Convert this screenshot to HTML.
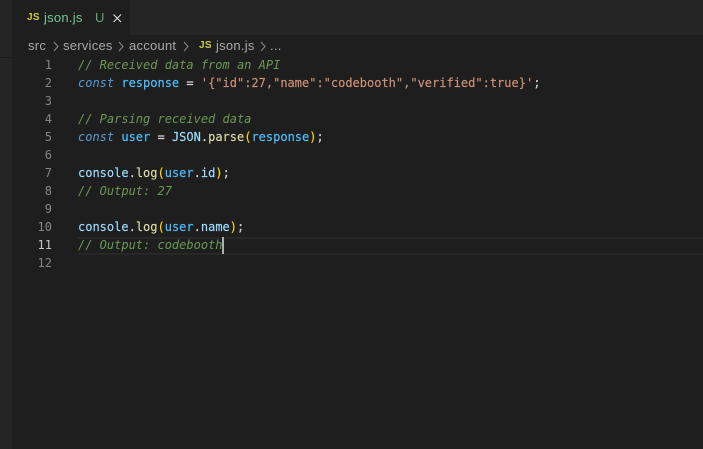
<!DOCTYPE html>
<html><head><meta charset="utf-8">
<style>
html,body{margin:0;padding:0;background:#1e1e1e;}
#r{position:relative;width:703px;height:449px;overflow:hidden;background:#1e1e1e;}
#r div{position:absolute;}
.s{left:0;top:0;width:12px;height:449px;background:#252526;}
.s2{left:0;top:57px;width:12px;height:1px;background:#1a1a1a;}
.tb{left:130px;top:0;width:573px;height:35px;background:#252526;}
.t{font:13px/18px "Liberation Sans",sans-serif;white-space:pre;letter-spacing:.25px;}
.b{color:#a9a9a9;top:37px;}
.js{font:bold 10px/12px "Liberation Sans",sans-serif;color:#cbcb41;letter-spacing:.3px;}
.n{left:13px;width:39px;text-align:right;font:12px/18px "DejaVu Sans Mono",monospace;color:#858585;}
.l{left:78px;font:12px/18px "DejaVu Sans Mono",monospace;color:#d4d4d4;white-space:pre;-webkit-text-stroke:.15px currentColor;}
.c{color:#6a9955;font-style:italic;-webkit-text-stroke:0;}.k{color:#569cd6;font-style:italic;-webkit-text-stroke:0;}.v{color:#4fc1ff}.u{color:#9cdcfe}
.st{color:#ce9178}.f{color:#dcdcaa}.y{color:#ffd700}
svg{position:absolute;}
</style></head><body><div id="r">
<div class="s"></div><div class="s2"></div><div class="tb"></div>
<div class="js" style="left:27px;top:12px;">JS</div>
<div class="t" style="left:44px;top:9px;color:#73c991;">json.js</div>
<div class="t" style="left:95px;top:9px;color:#5fa877;">U</div>
<svg style="left:113px;top:14px" width="9" height="9" viewBox="0 0 9 9"><path d="M.5 .5L8 8M8 .5L.5 8" stroke="#e0e0e0" stroke-width="1.1" fill="none"/></svg>

<div class="t b" style="left:28px;">src</div>
<svg style="left:53px;top:41px" width="6" height="11" viewBox="0 0 6 11"><path d="M1 1l4 4.5L1 10" stroke="#8c8c8c" fill="none"/></svg>
<div class="t b" style="left:63px;">services</div>
<svg style="left:118px;top:41px" width="6" height="11" viewBox="0 0 6 11"><path d="M1 1l4 4.5L1 10" stroke="#8c8c8c" fill="none"/></svg>
<div class="t b" style="left:129px;">account</div>
<svg style="left:183px;top:41px" width="6" height="11" viewBox="0 0 6 11"><path d="M1 1l4 4.5L1 10" stroke="#8c8c8c" fill="none"/></svg>
<div class="js" style="left:199px;top:40px;">JS</div>
<div class="t b" style="left:216px;">json.js</div>
<svg style="left:260px;top:41px" width="6" height="11" viewBox="0 0 6 11"><path d="M1 1l4 4.5L1 10" stroke="#8c8c8c" fill="none"/></svg>
<div class="t b" style="left:270px;">...</div>

<div style="left:78px;top:237px;width:625px;height:2px;background:#282828;"></div>
<div style="left:78px;top:253px;width:625px;height:2px;background:#282828;"></div>

<div class="n" style="top:56px">1</div>
<div class="n" style="top:74px">2</div>
<div class="n" style="top:92px">3</div>
<div class="n" style="top:110px">4</div>
<div class="n" style="top:128px">5</div>
<div class="n" style="top:146px">6</div>
<div class="n" style="top:164px">7</div>
<div class="n" style="top:182px">8</div>
<div class="n" style="top:200px">9</div>
<div class="n" style="top:218px">10</div>
<div class="n" style="top:236px;color:#c6c6c6">11</div>
<div class="n" style="top:254px">12</div>

<div class="l" style="top:56px"><span class="c">// Received data from an API</span></div>
<div class="l" style="top:74px"><span class="k">const</span> <span class="v">response</span> = <span class="st">'{"id":27,"name":"codebooth","verified":true}'</span>;</div>
<div class="l" style="top:110px"><span class="c">// Parsing received data</span></div>
<div class="l" style="top:128px"><span class="k">const</span> <span class="v">user</span> = <span class="u">JSON</span>.<span class="f">parse</span><span class="y">(</span><span class="v">response</span><span class="y">)</span>;</div>
<div class="l" style="top:164px"><span class="u">console</span>.<span class="f">log</span><span class="y">(</span><span class="v">user</span>.<span class="u">id</span><span class="y">)</span>;</div>
<div class="l" style="top:182px"><span class="c">// Output: 27</span></div>
<div class="l" style="top:218px"><span class="u">console</span>.<span class="f">log</span><span class="y">(</span><span class="v">user</span>.<span class="u">name</span><span class="y">)</span>;</div>
<div class="l" style="top:236px"><span class="c">// Output: codebooth</span></div>
<div style="left:222px;top:237px;width:2px;height:17px;background:#aeafad;"></div>
</div></body></html>
